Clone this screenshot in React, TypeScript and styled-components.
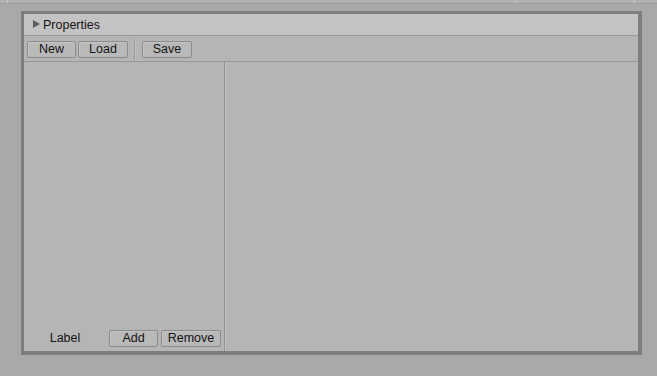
import styled, { createGlobalStyle } from "styled-components";

const GlobalStyle = createGlobalStyle`
  html, body {
    margin: 0;
    padding: 0;
    background: #a9a9a9;
  }
  body {
    font-family: "Liberation Sans", Arial, sans-serif;
    font-size: 12.5px;
    color: #141414;
  }
`;

const Page = styled.div`
  width: 657px;
  height: 376px;
  display: flex;
  flex-direction: column;
  overflow: hidden;
`;

const TopStrip = styled.div`
  height: 3px;
  display: flex;
  background: #b1b1b1;
  border-bottom: 1px solid #9b9b9b;
`;

const StripCell = styled.div<{ $w: number }>`
  width: ${(p) => p.$w}px;
  flex-shrink: 0;
  border-right: 1px solid #c6c6c6;
`;

const Stage = styled.div`
  padding: 7px 0 0 21px;
`;

const Frame = styled.div`
  width: 614px;
  height: 337px;
  border: 3px solid #7e7e7e;
  border-right-width: 4px;
  border-bottom-width: 4px;
  display: flex;
  flex-direction: column;
  background: #b5b5b5;
`;

const Header = styled.div`
  height: 21px;
  display: flex;
  align-items: center;
  gap: 3px;
  padding-left: 9px;
  background: #c3c3c3;
  border-bottom: 1px solid #9a9a9a;
`;

const Arrow = styled.span`
  width: 0;
  height: 0;
  border-top: 4px solid transparent;
  border-bottom: 4px solid transparent;
  border-left: 7px solid #5c5c5c;
  margin-top: -1px;
`;

const Toolbar = styled.div`
  height: 26px;
  box-sizing: border-box;
  display: flex;
  align-items: center;
  gap: 2px;
  padding: 1px 0 0 3px;
  border-bottom: 1px solid #989898;
`;

const Button = styled.button<{ $w: number }>`
  width: ${(p) => p.$w}px;
  height: 17px;
  padding: 0;
  font-family: "Liberation Sans", Arial, sans-serif;
  font-size: 12.5px;
  color: #141414;
  background: #b9b9b9;
  border: 1px solid #8b8b8b;
  border-radius: 2px;
  box-shadow: inset 1px 1px 0 #c4c4c4;
  line-height: 15px;
`;

const ToolSep = styled.div`
  width: 1px;
  align-self: stretch;
  margin: 1px 5px 1px 4px;
  background: #999;
  box-shadow: 1px 0 0 #c2c2c2;
`;

const Body = styled.div`
  flex: 1;
  display: flex;
`;

const LeftPane = styled.div`
  width: 200px;
  display: flex;
  flex-direction: column;
  justify-content: flex-end;
  border-right: 1px solid #959595;
  box-shadow: 1px 0 0 #c0c0c0;
`;

const PaneFooter = styled.div`
  height: 22px;
  display: flex;
  align-items: center;
  gap: 3px;
  padding-right: 3px;
  margin-bottom: 2px;
`;

const Label = styled.span`
  flex: 1;
  text-align: center;
`;

const RightPane = styled.div`
  flex: 1;
  margin-left: 1px;
`;

export default function App() {
  return (
    <Page>
      <GlobalStyle />
      <TopStrip>
        <StripCell $w={7} />
        <StripCell $w={508} />
        <StripCell $w={117} />
      </TopStrip>
      <Stage>
        <Frame>
          <Header>
            <Arrow />
            <span>Properties</span>
          </Header>
          <Toolbar>
            <Button $w={49}>New</Button>
            <Button $w={50}>Load</Button>
            <ToolSep />
            <Button $w={50}>Save</Button>
          </Toolbar>
          <Body>
            <LeftPane>
              <PaneFooter>
                <Label>Label</Label>
                <Button $w={49}>Add</Button>
                <Button $w={60}>Remove</Button>
              </PaneFooter>
            </LeftPane>
            <RightPane />
          </Body>
        </Frame>
      </Stage>
    </Page>
  );
}
